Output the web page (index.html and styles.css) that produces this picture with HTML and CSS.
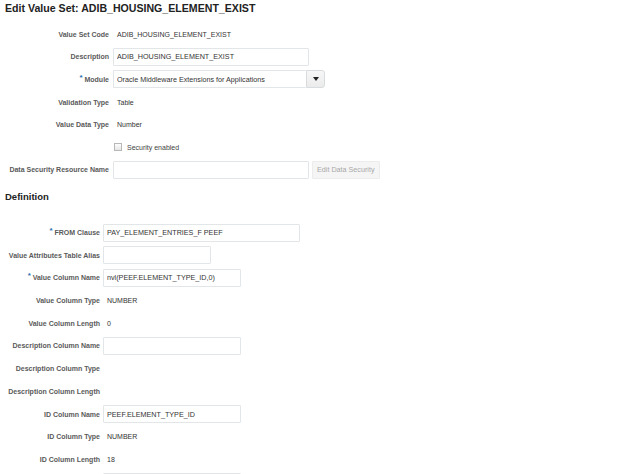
FILE: index.html
```html
<!DOCTYPE html>
<html lang="en">
<head>
  <meta charset="UTF-8" />
  <title>Edit Value Set</title>
  <link rel="stylesheet" href="styles.css">
</head>
<body>

<div class="page">
  <h1 class="page-title">Edit Value Set: ADIB_HOUSING_ELEMENT_EXIST</h1>

  <div class="form form-top">
    <div class="label">Value Set Code</div>
    <div class="value">ADIB_HOUSING_ELEMENT_EXIST</div>

    <div class="label">Description</div>
    <div class="field"><input class="text-input w-196" type="text" value="ADIB_HOUSING_ELEMENT_EXIST"></div>

    <div class="label"><span class="req">*</span> Module</div>
    <div class="field">
      <div class="select">
        <input class="text-input select-input" type="text" value="Oracle Middleware Extensions for Applications">
        <button class="select-btn"><span class="arrow"></span></button>
      </div>
    </div>

    <div class="label">Validation Type</div>
    <div class="value">Table</div>

    <div class="label">Value Data Type</div>
    <div class="value">Number</div>

    <div class="label"></div>
    <div class="field">
      <label class="check"><span class="box"></span>Security enabled</label>
    </div>

    <div class="label">Data Security Resource Name</div>
    <div class="field">
      <input class="text-input w-196" type="text">
      <button class="btn-disabled">Edit Data Security</button>
    </div>
  </div>

  <h2 class="section-title">Definition</h2>

  <div class="form form-def">
    <div class="label"><span class="req">*</span> FROM Clause</div>
    <div class="field"><input class="text-input w-197" type="text" value="PAY_ELEMENT_ENTRIES_F PEEF"></div>

    <div class="label">Value Attributes Table Alias</div>
    <div class="field"><input class="text-input w-108" type="text"></div>

    <div class="label"><span class="req">*</span> Value Column Name</div>
    <div class="field"><input class="text-input w-138" type="text" value="nvl(PEEF.ELEMENT_TYPE_ID,0)"></div>

    <div class="label">Value Column Type</div>
    <div class="value">NUMBER</div>

    <div class="label">Value Column Length</div>
    <div class="value">0</div>

    <div class="label">Description Column Name</div>
    <div class="field"><input class="text-input w-138" type="text"></div>

    <div class="label">Description Column Type</div>
    <div class="value"></div>

    <div class="label">Description Column Length</div>
    <div class="value"></div>

    <div class="label">ID Column Name</div>
    <div class="field"><input class="text-input w-138" type="text" value="PEEF.ELEMENT_TYPE_ID"></div>

    <div class="label">ID Column Type</div>
    <div class="value">NUMBER</div>

    <div class="label">ID Column Length</div>
    <div class="value">18</div>

    <div class="label"></div>
    <div class="field"><input class="text-input w-138" type="text"></div>
  </div>
</div>

</body>
</html>
```

FILE: styles.css
```css
body {
  margin: 0;
  background-color: #fff;
  font-family: "Liberation Sans", Arial, sans-serif;
  color: #333;
}

.page {
  padding: 1px 5px 0 5px;
}

.page-title {
  margin: 0;
  font-size: 10.6px;
  font-weight: bold;
  color: #222;
  line-height: 14px;
}

.form {
  display: grid;
  align-items: center;
}

.form-top {
  grid-template-columns: 104px auto;
  grid-auto-rows: 22.6px;
  column-gap: 4px;
  margin-top: 8px;
}

.form-def {
  grid-template-columns: 95px auto;
  grid-auto-rows: 22.7px;
  column-gap: 3px;
  margin-top: 18px;
}

.label {
  text-align: right;
  font-size: 7px;
  font-weight: bold;
  color: #5a5a5a;
  white-space: nowrap;
}

.req {
  color: #2f6fae;
  font-size: 8px;
  position: relative;
  top: -2px;
}

.value {
  font-size: 7px;
  color: #333;
  padding-left: 4px;
}

.field {
  display: flex;
  align-items: center;
  gap: 3px;
}

.text-input {
  box-sizing: border-box;
  height: 18px;
  border: 1px solid #e3e6e8;
  border-radius: 1px;
  background-color: #fff;
  font-family: "Liberation Sans", Arial, sans-serif;
  font-size: 7.2px;
  line-height: 16px;
  color: #333;
  padding: 0 3px;
  margin: 0;
  outline: none;
}

.w-196 { width: 196px; }
.w-197 { width: 197px; }
.w-108 { width: 108px; }
.w-138 { width: 138px; }

.select {
  display: flex;
  width: 212px;
}

.select-input {
  flex: 1;
  min-width: 0;
  border-right: none;
}

.select-btn {
  box-sizing: border-box;
  width: 19px;
  height: 18px;
  margin: 0;
  padding: 0;
  border: 1px solid #d9dcde;
  border-radius: 0 3px 3px 0;
  background: linear-gradient(#f7f7f7, #ebebeb);
  display: flex;
  align-items: center;
  justify-content: center;
}

.arrow {
  width: 0;
  height: 0;
  border-left: 3px solid transparent;
  border-right: 3px solid transparent;
  border-top: 4px solid #222;
}

.check {
  display: flex;
  align-items: center;
  font-size: 7px;
  color: #444;
}

.box {
  box-sizing: border-box;
  width: 8px;
  height: 8px;
  border: 1px solid #b8b8b8;
  background: linear-gradient(#fdfdfd, #e6e6e6);
  margin: 0 5px 0 1px;
}

.btn-disabled {
  box-sizing: border-box;
  height: 18px;
  padding: 0 4px;
  margin: 0;
  border: 1px solid #ececec;
  border-radius: 1px;
  background-color: #f5f5f5;
  font-family: "Liberation Sans", Arial, sans-serif;
  font-size: 7.2px;
  color: #a8a8a8;
}

.section-title {
  margin: 10px 0 0 0;
  font-size: 9.5px;
  font-weight: bold;
  color: #222;
  line-height: 12px;
}
```
